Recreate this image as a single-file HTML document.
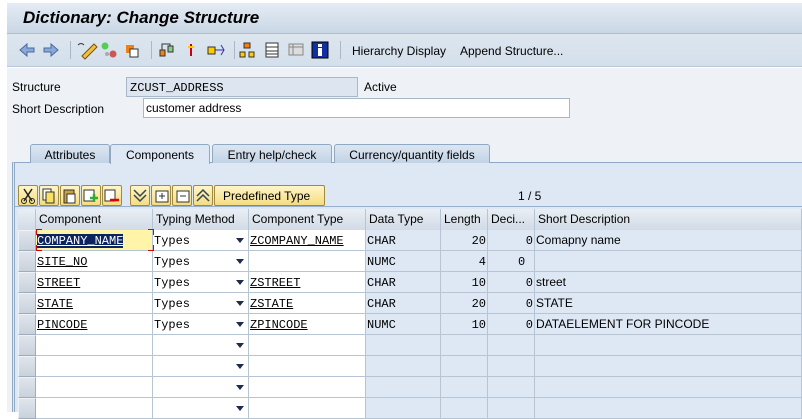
<!DOCTYPE html>
<html><head><meta charset="utf-8"><style>
*{margin:0;padding:0;box-sizing:border-box}
body{width:802px;height:412px;overflow:hidden;background:#fff;font-family:"Liberation Sans",sans-serif;font-size:12px;color:#000;position:relative}
.a{position:absolute}
.mono{font-family:"Liberation Mono",monospace;font-size:12px}
.title{left:7px;top:3px;width:795px;height:31px;background:linear-gradient(#e4ecf4,#c9d7e5);border-bottom:1px solid #b0c0d2}
.title span{position:absolute;left:16px;top:5px;font-size:17px;font-weight:bold;font-style:italic;color:#000}
.tb{left:7px;top:34px;width:795px;height:33px;background:linear-gradient(#dde6ef,#d3dfeb);border-bottom:1px solid #b8c6d6}
.form{left:7px;top:68px;width:795px;height:344px;background:#eef1f6}
.sep{width:1px;height:18px;background:#a9b8c9;top:41px}
.tab{top:144px;height:19px;border:1px solid #8fa8c4;border-bottom:none;background:linear-gradient(#dce6f1,#c2d3e6);border-radius:3px 3px 0 0;padding-top:3px;font-size:12px;text-align:center}
.panel{left:12px;top:162px;width:790px;height:250px;background:#dde8f4;border-top:1px solid #8fa8c4;border-left:3px double #8fa8c4}
.btn{top:185px;height:21px;width:20px;background:linear-gradient(#fff6c8,#f4dc80);border:1px solid #a08a40;border-radius:2px}
.hd{top:209px;height:21px;background:linear-gradient(#e9eef4,#d1dbe6);border-right:1px solid #b7c4d3;padding:3px 0 0 3px;font-size:12px}
.cell{height:21px;border-right:1px solid #b7c4d3;border-bottom:1px solid #b7c4d3;padding:4px 1px 0 1px;white-space:nowrap;overflow:hidden}
.w{background:#fff}
.b{background:#dde8f4}
.sel{background:linear-gradient(#dfe5ec,#c9d2dc);border:1px solid #eef2f6;border-right:1px solid #a0acb8;border-bottom:1px solid #a0acb8}
u{text-decoration:underline}
.dd{position:absolute;right:4px;top:8px;width:0;height:0;border-left:4px solid transparent;border-right:4px solid transparent;border-top:5px solid #1c2c4c}
.r{text-align:right}
.sans{font-family:'Liberation Sans';font-size:12px;padding-left:1px;padding-top:3px}
.rc{position:absolute;width:6px;height:6px;border-color:#d00;border-style:solid;border-width:0}
</style></head><body>
<div class="a title"><span>Dictionary: Change Structure</span></div>
<div class="a tb"></div>
<svg class="a" style="left:18px;top:40px" width="340" height="20">
<path d="M2 10 L9 4 V8 H16 V12 H9 V16 Z" fill="#8aa8d8" stroke="#4a6aa0"/>
<path d="M40 10 L33 4 V8 H26 V12 H33 V16 Z" fill="#8aa8d8" stroke="#4a6aa0"/>
<path d="M64 16 L76 4 L79 7 L67 19 Z" fill="#f0c040" stroke="#805010"/><path d="M60 5 q3 -3 6 0" stroke="#333" fill="none"/>
<circle cx="87" cy="6" r="3.5" fill="#5c5"/><circle cx="95" cy="14" r="3.5" fill="#c55"/><circle cx="89" cy="14" r="2" fill="#aaa"/>
<rect x="108" y="5" width="8" height="8" fill="#f08010"/><rect x="112" y="9" width="8" height="8" fill="#fff" stroke="#333"/>
<rect x="142" y="10" width="5" height="6" fill="#f08010" stroke="#333"/><rect x="150" y="6" width="5" height="6" fill="#8c8" stroke="#333"/><path d="M144 10 V4 H152 V6" stroke="#333" fill="none"/>
<rect x="172" y="4" width="2" height="12" fill="#c00"/><rect x="170" y="6" width="6" height="2" fill="#fc0"/>
<rect x="190" y="7" width="7" height="7" fill="#fc0" stroke="#333"/><path d="M197 10 H206 M203 5 L206 10 L203 15" stroke="#33a" fill="none"/>
<rect x="226" y="3" width="6" height="5" fill="#f08010" stroke="#333"/><rect x="222" y="12" width="5" height="5" fill="#fc0" stroke="#333"/><rect x="231" y="12" width="5" height="5" fill="#fc0" stroke="#333"/>
<rect x="248" y="3" width="12" height="14" fill="#fff" stroke="#333"/><path d="M248 7H260M248 11H260M248 14H260" stroke="#333"/>
<rect x="271" y="4" width="14" height="11" fill="#ddd" stroke="#888"/><path d="M271 7H285M275 4V15" stroke="#888"/>
<rect x="294" y="2" width="16" height="16" fill="#1030a0" stroke="#000"/><rect x="300" y="4" width="4" height="3" fill="#fff"/><rect x="300" y="8" width="4" height="8" fill="#fff"/>
</svg>
<div class="a sep" style="left:70px"></div><div class="a sep" style="left:151px"></div><div class="a sep" style="left:234px"></div><div class="a sep" style="left:340px"></div>
<div class="a" style="left:352px;top:44px">Hierarchy Display</div>
<div class="a" style="left:460px;top:44px">Append Structure...</div>
<div class="a form"></div>
<div class="a" style="left:12px;top:80px">Structure</div>
<div class="a mono" style="left:126px;top:77px;width:232px;height:20px;background:#dde6f0;border:1px solid #a9b8c8;padding:3px 0 0 3px">ZCUST_ADDRESS</div>
<div class="a" style="left:364px;top:80px">Active</div>
<div class="a" style="left:12px;top:102px">Short Description</div>
<div class="a" style="left:143px;top:98px;width:427px;height:20px;background:#fff;border:1px solid #a9b8c8;padding:2px 0 0 2px">customer address</div>
<div class="a panel"></div>
<div class="a tab" style="left:30px;width:80px">Attributes</div>
<div class="a tab" style="left:110px;width:100px;background:#dde8f4;height:20px">Components</div>
<div class="a tab" style="left:212px;width:120px">Entry help/check</div>
<div class="a tab" style="left:334px;width:156px">Currency/quantity fields</div>
<div class="a btn" style="left:18px"></div><div class="a btn" style="left:39px"></div><div class="a btn" style="left:60px"></div><div class="a btn" style="left:81px"></div><div class="a btn" style="left:102px"></div>
<div class="a btn" style="left:130px"></div><div class="a btn" style="left:151px"></div><div class="a btn" style="left:172px"></div><div class="a btn" style="left:193px"></div>
<svg class="a" style="left:18px;top:185px" width="200" height="21">
<path d="M6 4 L14 16 M14 4 L6 16" stroke="#222" stroke-width="1.5"/><circle cx="6" cy="16" r="2.5" fill="none" stroke="#222"/><circle cx="14" cy="16" r="2.5" fill="none" stroke="#222"/>
<rect x="25" y="4" width="8" height="11" fill="#fff" stroke="#333"/><rect x="28" y="7" width="8" height="11" fill="#f8e060" stroke="#333"/>
<rect x="46" y="5" width="10" height="13" fill="#c8a040" stroke="#333"/><rect x="49" y="9" width="8" height="9" fill="#fff" stroke="#333"/>
<rect x="66" y="5" width="10" height="11" fill="#fff" stroke="#333"/><path d="M72 13 H80 M76 9 V17" stroke="#3a3" stroke-width="2.5"/>
<rect x="87" y="5" width="10" height="11" fill="#fff" stroke="#333"/><path d="M92 15 H101" stroke="#d00" stroke-width="2.5"/>
<path d="M116 5 L122 11 L128 5 M116 10 L122 16 L128 10" stroke="#345" fill="none" stroke-width="1.5"/>
<rect x="138" y="6" width="12" height="11" fill="#fff" stroke="#333"/><path d="M141 11H147M144 8V14" stroke="#333"/>
<rect x="159" y="6" width="12" height="11" fill="#fff" stroke="#333"/><path d="M162 11H168" stroke="#333"/>
<path d="M179 11 L185 5 L191 11 M179 16 L185 10 L191 16" stroke="#345" fill="none" stroke-width="1.5"/>
</svg>
<div class="a" style="left:214px;top:185px;width:111px;height:21px;background:linear-gradient(#fff6c8,#f4dc80);border:1px solid #a08a40;border-radius:2px;padding:3px 0 0 8px">Predefined Type</div>
<div class="a" style="left:518px;top:189px">1 / 5</div>
<div class="a" style="left:15px;top:206px;width:787px;height:1px;background:#98b0cc"></div>
<div class="a hd" style="left:18px;width:18px"></div>
<div class="a hd" style="left:36px;width:117px">Component</div>
<div class="a hd" style="left:153px;width:96px">Typing Method</div>
<div class="a hd" style="left:249px;width:117px">Component Type</div>
<div class="a hd" style="left:366px;width:75px">Data Type</div>
<div class="a hd" style="left:441px;width:47px">Length</div>
<div class="a hd" style="left:488px;width:47px">Deci...</div>
<div class="a hd" style="left:535px;width:267px">Short Description</div>
<div class="a" style="left:18px;top:230px">
<div style="display:grid;grid-template-columns:18px 117px 96px 117px 75px 47px 47px 267px;grid-auto-rows:21px" class="mono">
<div class="sel"></div><div class="cell" style="background:#fff4a8"><span style="background:#0a2460;color:#fff;text-decoration:underline">COMPANY_NAME</span></div><div class="cell w" style="position:relative">Types<i class="dd"></i></div><div class="cell w"><u>ZCOMPANY_NAME</u></div><div class="cell b">CHAR</div><div class="cell b r">20</div><div class="cell b r">0</div><div class="cell b sans">Comapny name</div>
<div class="sel"></div><div class="cell w"><u>SITE_NO</u></div><div class="cell w" style="position:relative">Types<i class="dd"></i></div><div class="cell w"></div><div class="cell b">NUMC</div><div class="cell b r">4</div><div class="cell b" style="padding-left:30px">0</div><div class="cell b"></div>
<div class="sel"></div><div class="cell w"><u>STREET</u></div><div class="cell w" style="position:relative">Types<i class="dd"></i></div><div class="cell w"><u>ZSTREET</u></div><div class="cell b">CHAR</div><div class="cell b r">10</div><div class="cell b r">0</div><div class="cell b sans">street</div>
<div class="sel"></div><div class="cell w"><u>STATE</u></div><div class="cell w" style="position:relative">Types<i class="dd"></i></div><div class="cell w"><u>ZSTATE</u></div><div class="cell b">CHAR</div><div class="cell b r">20</div><div class="cell b r">0</div><div class="cell b sans">STATE</div>
<div class="sel"></div><div class="cell w"><u>PINCODE</u></div><div class="cell w" style="position:relative">Types<i class="dd"></i></div><div class="cell w"><u>ZPINCODE</u></div><div class="cell b">NUMC</div><div class="cell b r">10</div><div class="cell b r">0</div><div class="cell b sans">DATAELEMENT FOR PINCODE</div>
<div class="sel"></div><div class="cell w"></div><div class="cell w" style="position:relative"><i class="dd"></i></div><div class="cell w"></div><div class="cell b"></div><div class="cell b"></div><div class="cell b"></div><div class="cell b"></div>
<div class="sel"></div><div class="cell w"></div><div class="cell w" style="position:relative"><i class="dd"></i></div><div class="cell w"></div><div class="cell b"></div><div class="cell b"></div><div class="cell b"></div><div class="cell b"></div>
<div class="sel"></div><div class="cell w"></div><div class="cell w" style="position:relative"><i class="dd"></i></div><div class="cell w"></div><div class="cell b"></div><div class="cell b"></div><div class="cell b"></div><div class="cell b"></div>
<div class="sel"></div><div class="cell w"></div><div class="cell w" style="position:relative"><i class="dd"></i></div><div class="cell w"></div><div class="cell b"></div><div class="cell b"></div><div class="cell b"></div><div class="cell b"></div>
</div></div>
<div class="rc" style="left:36px;top:229px;border-top-width:1px;border-left-width:1px"></div>
<div class="rc" style="left:148px;top:229px;border-top-width:1px;border-right-width:1px"></div>
<div class="rc" style="left:36px;top:245px;border-bottom-width:1px;border-left-width:1px"></div>
<div class="rc" style="left:148px;top:245px;border-bottom-width:1px;border-right-width:1px"></div>
</body></html>
